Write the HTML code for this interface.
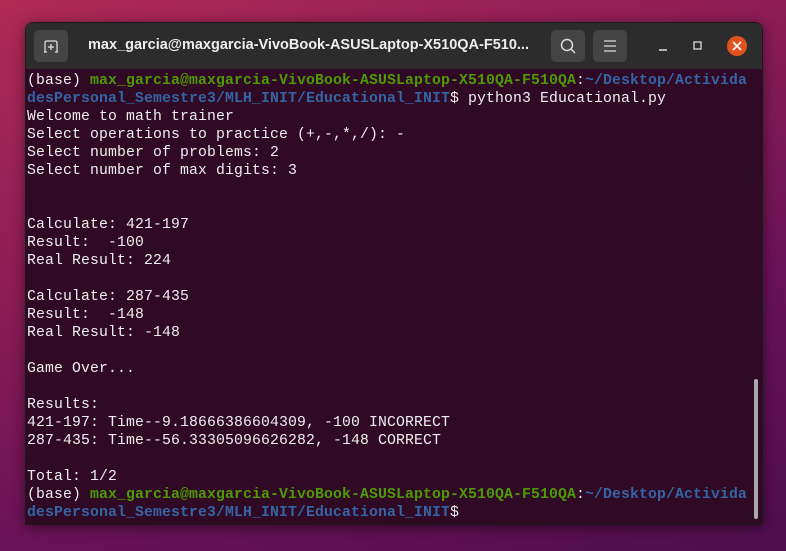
<!DOCTYPE html>
<html><head><meta charset="utf-8"><style>
html,body{margin:0;padding:0;width:786px;height:551px;overflow:hidden}
body{background:linear-gradient(160deg,#b02a55 0%,#8c1c55 35%,#6a1256 65%,#4e0e4c 100%);position:relative;font-family:"Liberation Sans",sans-serif}
.win{position:absolute;left:25px;top:22px;width:736px;height:501px;border-radius:8px 8px 0 0;overflow:hidden;box-shadow:0 2px 12px rgba(0,0,0,.5);border:1px solid #1a1a1a}
.tb{height:46px;background:#2c2c2c;position:relative}
.btn{position:absolute;top:7px;width:34px;height:32px;background:#444;border-radius:5px}
.title{position:absolute;left:62px;top:14px;color:#eee;font-weight:bold;font-size:14.5px}
.term{position:absolute;top:46px;left:0;right:0;bottom:0;background:#300a24}
pre{margin:0;position:absolute;left:1px;top:3px;font-family:"Liberation Mono",monospace;font-size:14.8px;letter-spacing:0.12px;line-height:18px;color:#eee}
.g{color:#4e9a06;font-weight:bold}.b{color:#3465a4;font-weight:bold}
.sb{position:absolute;right:4px;top:310px;width:4px;height:140px;background:#aaa;border-radius:2px}
</style></head><body>
<div class="win">
<div class="tb">
<div class="btn" style="left:8px"><svg width="34" height="32"><path d="M11 22 V13 Q11 11 13 11 H21 Q23 11 23 13 V22 M14 17 H20 M17 14 V20 M10 22 H13 M21 22 H24" stroke="#ddd" stroke-width="1.3" fill="none"/></svg></div>
<div class="title">max_garcia@maxgarcia-VivoBook-ASUSLaptop-X510QA-F510...</div>
<div class="btn" style="left:525px"><svg width="34" height="32"><circle cx="16" cy="15" r="5.5" stroke="#ddd" stroke-width="1.5" fill="none"/><path d="M20 19 L24 23" stroke="#ddd" stroke-width="1.5"/></svg></div>
<div class="btn" style="left:567px"><svg width="34" height="32"><path d="M11 11H23M11 16H23M11 21H23" stroke="#ddd" stroke-width="1.3"/></svg></div>
<svg style="position:absolute;left:620px;top:10px" width="110" height="26"><path d="M13 17H21" stroke="#ddd" stroke-width="1.5"/><rect x="48" y="9" width="7" height="7" stroke="#ddd" stroke-width="1.3" fill="none"/><circle cx="91" cy="13" r="10" fill="#e05320"/><path d="M87 9L95 17M95 9L87 17" stroke="#fff" stroke-width="1.6"/></svg>
</div>
<div class="term">
<pre>(base) <span class="g">max_garcia@maxgarcia-VivoBook-ASUSLaptop-X510QA-F510QA</span>:<span class="b">~/Desktop/Activida</span>
<span class="b">desPersonal_Semestre3/MLH_INIT/Educational_INIT</span>$ python3 Educational.py
Welcome to math trainer
Select operations to practice (+,-,*,/): -
Select number of problems: 2
Select number of max digits: 3


Calculate: 421-197
Result:  -100
Real Result: 224

Calculate: 287-435
Result:  -148
Real Result: -148

Game Over...

Results:
421-197: Time--9.18666386604309, -100 INCORRECT
287-435: Time--56.33305096626282, -148 CORRECT

Total: 1/2
(base) <span class="g">max_garcia@maxgarcia-VivoBook-ASUSLaptop-X510QA-F510QA</span>:<span class="b">~/Desktop/Activida</span>
<span class="b">desPersonal_Semestre3/MLH_INIT/Educational_INIT</span>$</pre>
<div class="sb"></div>
</div>
</div>
</body></html>
